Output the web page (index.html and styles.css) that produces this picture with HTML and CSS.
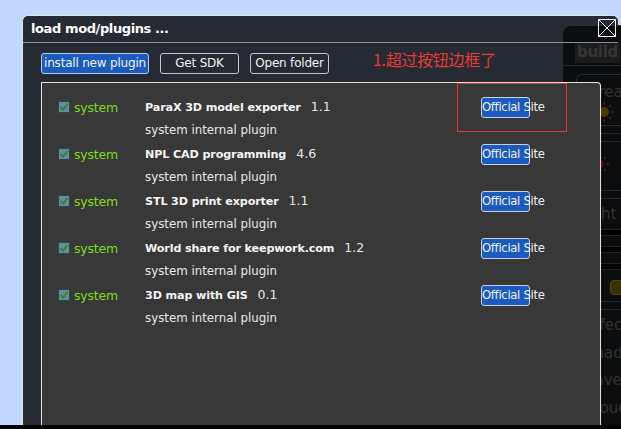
FILE: index.html
```html
<!DOCTYPE html>
<html>
<head>
<meta charset="utf-8">
<link rel="stylesheet" href="styles.css">
</head>
<body>
<div class="dialog">
  <div class="bgwin">
    <div class="bw-btn">build</div>
    <div class="bw-line l65"></div>
    <div class="bw-box">
      <span class="bw-text t-create">Create</span>
      <svg class="sun" width="22" height="22" viewBox="0 0 22 22"><circle cx="11" cy="11" r="5" fill="#4a3a08"/><g stroke="#4a3a08" stroke-width="1"><line x1="11" y1="1" x2="11" y2="4"/><line x1="11" y1="18" x2="11" y2="21"/><line x1="18" y1="11" x2="21" y2="11"/><line x1="16" y1="6" x2="18" y2="4"/><line x1="16" y1="16" x2="18" y2="18"/></g></svg>
    </div>
    <div class="bw-line l133"></div>
    <div class="bw-line l141"></div>
    <div class="bw-row">
      <svg class="sun" width="22" height="22" viewBox="0 0 22 22"><circle cx="11" cy="11" r="5" fill="#4a0c0c"/><g stroke="#4a3a08" stroke-width="1"><line x1="11" y1="1" x2="11" y2="4"/><line x1="11" y1="18" x2="11" y2="21"/><line x1="18" y1="11" x2="21" y2="11"/><line x1="16" y1="6" x2="18" y2="4"/><line x1="16" y1="16" x2="18" y2="18"/></g></svg>
    </div>
    <div class="bw-line l189"></div>
    <div class="bw-line l197"></div>
    <span class="bw-text t-light">Light</span>
    <div class="bw-bars">
      <div class="bar"></div><div class="bar"></div><div class="bar"></div>
    </div>
    <div class="bw-pill"></div>
    <div class="bw-line l300"></div>
    <div class="bw-line l308"></div>
    <span class="bw-text t-words first">Effect</span>
    <span class="bw-text t-words">Shade</span>
    <span class="bw-text t-words">Save b</span>
    <span class="bw-text t-words">Cloud</span>
  </div>

  <div class="titlebar">
    <span class="title">load mod/plugins ...</span>
    <span class="close"><svg width="18" height="18" viewBox="0 0 18 18"><rect x="0.5" y="0.5" width="17" height="17" fill="none" stroke="#f0f0f0"/><line x1="1" y1="1" x2="17" y2="17" stroke="#f0f0f0"/><line x1="17" y1="1" x2="1" y2="17" stroke="#f0f0f0"/></svg></span>
  </div>

  <div class="toolbar">
    <button class="btn btn-primary">install new plugin</button>
    <button class="btn">Get SDK</button>
    <button class="btn">Open folder</button>
    <span class="note">1.超过按钮边框了</span>
  </div>

  <div class="panel">
    <div class="row">
      <svg class="check" width="12" height="12" viewBox="0 0 12 12"><rect x="0.5" y="0.5" width="11" height="11" fill="#6b8a99" stroke="#2a4555"/><path d="M2.5 6 L5 8.8 L9.6 3" fill="none" stroke="#2f8a22" stroke-width="2"/></svg>
      <span class="sys">system</span>
      <span class="name"><b>ParaX 3D model exporter</b><span class="ver">1.1</span></span>
      <span class="site"><span class="site-btn">Official Site</span></span>
      <span class="desc">system internal plugin</span>
    </div>
    <div class="row">
      <svg class="check" width="12" height="12" viewBox="0 0 12 12"><rect x="0.5" y="0.5" width="11" height="11" fill="#6b8a99" stroke="#2a4555"/><path d="M2.5 6 L5 8.8 L9.6 3" fill="none" stroke="#2f8a22" stroke-width="2"/></svg>
      <span class="sys">system</span>
      <span class="name"><b>NPL CAD programming</b><span class="ver">4.6</span></span>
      <span class="site"><span class="site-btn">Official Site</span></span>
      <span class="desc">system internal plugin</span>
    </div>
    <div class="row">
      <svg class="check" width="12" height="12" viewBox="0 0 12 12"><rect x="0.5" y="0.5" width="11" height="11" fill="#6b8a99" stroke="#2a4555"/><path d="M2.5 6 L5 8.8 L9.6 3" fill="none" stroke="#2f8a22" stroke-width="2"/></svg>
      <span class="sys">system</span>
      <span class="name"><b>STL 3D print exporter</b><span class="ver">1.1</span></span>
      <span class="site"><span class="site-btn">Official Site</span></span>
      <span class="desc">system internal plugin</span>
    </div>
    <div class="row">
      <svg class="check" width="12" height="12" viewBox="0 0 12 12"><rect x="0.5" y="0.5" width="11" height="11" fill="#6b8a99" stroke="#2a4555"/><path d="M2.5 6 L5 8.8 L9.6 3" fill="none" stroke="#2f8a22" stroke-width="2"/></svg>
      <span class="sys">system</span>
      <span class="name"><b>World share for keepwork.com</b><span class="ver">1.2</span></span>
      <span class="site"><span class="site-btn">Official Site</span></span>
      <span class="desc">system internal plugin</span>
    </div>
    <div class="row">
      <svg class="check" width="12" height="12" viewBox="0 0 12 12"><rect x="0.5" y="0.5" width="11" height="11" fill="#6b8a99" stroke="#2a4555"/><path d="M2.5 6 L5 8.8 L9.6 3" fill="none" stroke="#2f8a22" stroke-width="2"/></svg>
      <span class="sys">system</span>
      <span class="name"><b>3D map with GIS</b><span class="ver">0.1</span></span>
      <span class="site"><span class="site-btn">Official Site</span></span>
      <span class="desc">system internal plugin</span>
    </div>
  </div>

  <div class="annot-box"></div>
</div>
<div class="bottom-strip"></div>
</body>
</html>
```

FILE: styles.css
```css
html, body {
  margin: 0;
  padding: 0;
}
body {
  width: 621px;
  height: 429px;
  overflow: hidden;
  background: #c2d9fd;
  font-family: "DejaVu Sans", Verdana, sans-serif;
  color: #eeeeee;
  position: relative;
}

.dialog {
  position: absolute;
  left: 22px;
  top: 15px;
  width: 597px;
  height: 430px;
  background: #262a33;
  border: 1px solid #dfe3ea;
  border-bottom: none;
  border-radius: 6px 6px 0 0;
  box-sizing: border-box;
}

/* background window peeking through on the right */
.bgwin {
  position: absolute;
  left: 539px;
  top: 9px;
  width: 80px;
  height: 420px;
  background: #0c0d0f;
  border-top: 1px solid #2a2d33;
  border-left: 1px solid #2a2d33;
  border-radius: 9px 0 0 0;
  display: flex;
  flex-direction: column;
  overflow: hidden;
  z-index: 0;
  color: #333333;
  -webkit-text-fill-color: #333333;
}
.bw-btn {
  margin: 16px 0 0 12px;
  width: 45px;
  height: 21px;
  background: #1b1c1e;
  color: #363636;
  -webkit-text-fill-color: #363636;
  font-weight: bold;
  font-size: 15px;
  line-height: 21px;
  text-align: center;
  letter-spacing: -0.3px;
}
.bw-line {
  height: 1px;
  background: #26282c;
  flex: none;
}
.l65 { margin-top: 2px; }
.bw-box {
  margin: 8px 0 0 13px;
  height: 50px;
  border: 1px solid #2a2c30;
  border-right: none;
  border-radius: 6px 0 0 0;
  display: flex;
  flex-direction: column;
}
.bw-text {
  color: #333333;
  -webkit-text-fill-color: #333333;
  font-size: 15px;
  white-space: nowrap;
}
.t-create { margin: 9px 0 0 11px; line-height: 16px; }
.bw-box .sun { margin: 1px 0 0 16px; }
.l133 { margin-top: 7px; }
.l141 { margin-top: 7px; }
.bw-row { height: 44px; display: flex; align-items: center; padding-left: 25px; }
.l189 { margin-top: 4px; }
.l197 { margin-top: 7px; }
.t-light { margin: 6px 0 0 16px; line-height: 18px; }
.bw-bars {
  margin-top: 6px;
  display: flex;
  flex-direction: column;
  gap: 10px;
}
.bar {
  height: 5px;
  background: #000;
  border-top: 1px solid #202226;
  border-bottom: 1px solid #202226;
}
.bw-pill {
  margin: 10px 0 0 47px;
  width: 30px;
  height: 13px;
  background: #3e2e04;
  border: 1px solid #54420f;
  border-radius: 4px;
}
.l300 { margin-top: 6px; }
.l308 { margin-top: 7px; }
.t-words {
  margin-left: 22px;
  line-height: 27.5px;
}
.t-words.first { margin-top: 2px; }

/* title bar */
.titlebar {
  position: relative;
  z-index: 1;
  height: 26px;
  border-bottom: 1px solid #8c8f94;
  display: flex;
  align-items: flex-start;
  justify-content: space-between;
  padding: 0 2px 0 8px;
}
.title {
  font-weight: bold;
  font-size: 13px;
  letter-spacing: -0.4px;
  line-height: 26px;
  color: #ffffff;
}
.close {
  margin-top: 3px;
  width: 18px;
  height: 18px;
  display: block;
}
.close svg { display: block; }

/* toolbar */
.toolbar {
  position: relative;
  z-index: 1;
  display: flex;
  align-items: flex-start;
  gap: 11px;
  padding: 10px 0 0 18px;
  height: 21px;
}
.btn {
  height: 21px;
  width: 79px;
  padding: 0;
  margin: 0;
  background: transparent;
  border: 1px solid #c4c6ca;
  border-radius: 3px;
  color: #f2f2f2;
  font-family: "DejaVu Sans", Verdana, sans-serif;
  font-size: 12px;
  letter-spacing: -0.2px;
  line-height: 19px;
  text-align: center;
  white-space: nowrap;
}
.btn-primary {
  width: 108px;
  background: #1b5bbd;
  border-color: #b9c9ea;
}
.note {
  margin-left: 33px;
  margin-top: -6px;
  line-height: 24px;
  color: #e83a36;
  font-family: "Noto Sans CJK SC", sans-serif;
  font-size: 16px;
  letter-spacing: -0.3px;
}

/* plugin list panel */
.panel {
  position: relative;
  z-index: 1;
  margin: 8px 0 0 18px;
  width: 560px;
  height: 360px;
  box-sizing: border-box;
  background: #383838;
  border: 1px solid #e4e4e4;
  border-bottom: none;
  border-radius: 0 4px 0 0;
  padding: 12px 0 0 16px;
}
.row {
  display: grid;
  grid-template-columns: 16px 71px 336px 60px;
  grid-template-rows: 24px 23px;
  align-items: center;
}
.check { display: block; grid-row: 1; grid-column: 1; }
.sys {
  grid-row: 1;
  grid-column: 2;
  color: #7fdc1c;
  font-size: 12.5px;
  letter-spacing: -0.2px;
}
.name {
  grid-row: 1;
  grid-column: 3;
  display: flex;
  align-items: baseline;
  white-space: nowrap;
  margin-top: -2px;
}
.name b {
  font-size: 11.2px;
  font-weight: bold;
  letter-spacing: -0.15px;
  color: #f4f4f4;
}
.ver {
  margin-left: 10px;
  font-size: 12.5px;
  color: #e6e6e6;
}
.site { grid-row: 1; grid-column: 4; display: flex; }
.site-btn {
  display: block;
  width: 49px;
  height: 21px;
  box-sizing: border-box;
  background: #1b5bbd;
  border: 1px solid #c8d2e4;
  border-radius: 3px;
  font-size: 11.6px;
  line-height: 19px;
  color: #f2f2f2;
  white-space: nowrap;
  overflow: visible;
  letter-spacing: -0.3px;
}
.desc {
  grid-row: 2;
  grid-column: 3;
  font-size: 11.8px;
  color: #e8e8e8;
  white-space: nowrap;
  margin-top: -2px;
}

/* annotation overlay */
.annot-box {
  position: absolute;
  z-index: 2;
  left: 434px;
  top: 67px;
  width: 108px;
  height: 47px;
  border: 1px solid #e0363a;
}

.bottom-strip {
  position: absolute;
  left: 0;
  bottom: 0;
  width: 100%;
  height: 4px;
  background: #000;
  z-index: 5;
}
```
